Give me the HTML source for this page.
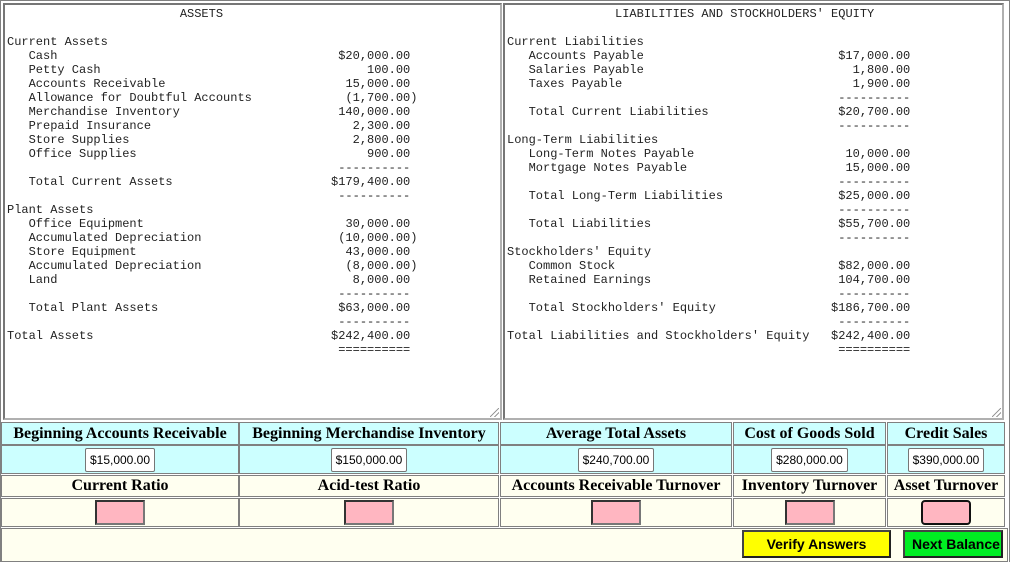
<!DOCTYPE html>
<html><head><meta charset="utf-8"><style>
*{box-sizing:border-box;margin:0;padding:0}
body{width:1013px;height:562px;background:#fff;position:relative;overflow:hidden;font-family:"Liberation Sans",Arial,sans-serif}
.frame{position:absolute;left:0;top:0;width:1010px;height:562px;border:1px solid #808080;border-bottom:none}
.ta{position:absolute;top:3px;height:417px;border:2px solid;border-color:#767676 #b0b0b0 #b0b0b0 #767676;background:#fff;padding:2px 0 0 2px;font-family:"Liberation Mono","Courier New",monospace;font-size:12px;line-height:14px;white-space:pre;color:#222}
.r{position:relative;width:57ch;height:14px}
.r b{font-weight:normal;position:absolute;right:0;top:0}
.grip{position:absolute;right:1px;bottom:1px;width:9px;height:9px;background:linear-gradient(135deg,transparent 45%,#999 45%,#999 55%,transparent 55%,transparent 70%,#999 70%,#999 80%,transparent 80%)}
.c{position:absolute;border:1px solid #808080;display:flex;align-items:center;justify-content:center}
.cy{background:#ccffff}.cr{background:#fffff0}
.h{font-family:"Liberation Serif","Times New Roman",serif;font-weight:bold;font-size:16px;color:#000;white-space:nowrap}
.in{background:#fff;border:1px solid #767676;border-radius:2px;height:24px;font-size:12px;padding:0 4px;display:flex;align-items:center;color:#000}
.pk{width:50px;height:25px;background:#ffb6c1;border:2px solid;border-color:#333 #777 #777 #333}
.btn{position:absolute;font-weight:bold;font-size:14px;display:flex;align-items:center;justify-content:center;border:2px solid;border-color:#444 #222 #222 #444;color:#000}
</style></head><body>
<div class="frame"></div>
<div class="ta" style="left:3px;width:499px"><div class="r">                        ASSETS</div><div class="r"></div><div class="r">Current Assets</div><div class="r">   Cash<b>$20,000.00 </b></div><div class="r">   Petty Cash<b>100.00 </b></div><div class="r">   Accounts Receivable<b>15,000.00 </b></div><div class="r">   Allowance for Doubtful Accounts<b>(1,700.00)</b></div><div class="r">   Merchandise Inventory<b>140,000.00 </b></div><div class="r">   Prepaid Insurance<b>2,300.00 </b></div><div class="r">   Store Supplies<b>2,800.00 </b></div><div class="r">   Office Supplies<b>900.00 </b></div><div class="r"><b>---------- </b></div><div class="r">   Total Current Assets<b>$179,400.00 </b></div><div class="r"><b>---------- </b></div><div class="r">Plant Assets</div><div class="r">   Office Equipment<b>30,000.00 </b></div><div class="r">   Accumulated Depreciation<b>(10,000.00)</b></div><div class="r">   Store Equipment<b>43,000.00 </b></div><div class="r">   Accumulated Depreciation<b>(8,000.00)</b></div><div class="r">   Land<b>8,000.00 </b></div><div class="r"><b>---------- </b></div><div class="r">   Total Plant Assets<b>$63,000.00 </b></div><div class="r"><b>---------- </b></div><div class="r">Total Assets<b>$242,400.00 </b></div><div class="r"><b>========== </b></div><div class="grip"></div></div>
<div class="ta" style="left:503px;width:501px"><div class="r">               LIABILITIES AND STOCKHOLDERS' EQUITY</div><div class="r"></div><div class="r">Current Liabilities</div><div class="r">   Accounts Payable<b>$17,000.00 </b></div><div class="r">   Salaries Payable<b>1,800.00 </b></div><div class="r">   Taxes Payable<b>1,900.00 </b></div><div class="r"><b>---------- </b></div><div class="r">   Total Current Liabilities<b>$20,700.00 </b></div><div class="r"><b>---------- </b></div><div class="r">Long-Term Liabilities</div><div class="r">   Long-Term Notes Payable<b>10,000.00 </b></div><div class="r">   Mortgage Notes Payable<b>15,000.00 </b></div><div class="r"><b>---------- </b></div><div class="r">   Total Long-Term Liabilities<b>$25,000.00 </b></div><div class="r"><b>---------- </b></div><div class="r">   Total Liabilities<b>$55,700.00 </b></div><div class="r"><b>---------- </b></div><div class="r">Stockholders' Equity</div><div class="r">   Common Stock<b>$82,000.00 </b></div><div class="r">   Retained Earnings<b>104,700.00 </b></div><div class="r"><b>---------- </b></div><div class="r">   Total Stockholders' Equity<b>$186,700.00 </b></div><div class="r"><b>---------- </b></div><div class="r">Total Liabilities and Stockholders' Equity<b>$242,400.00 </b></div><div class="r"><b>========== </b></div><div class="grip"></div></div>

<div class="c cy h" style="left:1px;top:422px;width:238px;height:23px">Beginning Accounts Receivable</div>
<div class="c cy h" style="left:239px;top:422px;width:260px;height:23px">Beginning Merchandise Inventory</div>
<div class="c cy h" style="left:500px;top:422px;width:232px;height:23px">Average Total Assets</div>
<div class="c cy h" style="left:733px;top:422px;width:153px;height:23px">Cost of Goods Sold</div>
<div class="c cy h" style="left:887px;top:422px;width:118px;height:23px">Credit Sales</div>

<div class="c cy" style="left:1px;top:445px;width:238px;height:29px"><div class="in">$15,000.00</div></div>
<div class="c cy" style="left:239px;top:445px;width:260px;height:29px"><div class="in">$150,000.00</div></div>
<div class="c cy" style="left:500px;top:445px;width:232px;height:29px"><div class="in">$240,700.00</div></div>
<div class="c cy" style="left:733px;top:445px;width:153px;height:29px"><div class="in">$280,000.00</div></div>
<div class="c cy" style="left:887px;top:445px;width:118px;height:29px"><div class="in">$390,000.00</div></div>

<div class="c cr h" style="left:1px;top:475px;width:238px;height:22px">Current Ratio</div>
<div class="c cr h" style="left:239px;top:475px;width:260px;height:22px">Acid-test Ratio</div>
<div class="c cr h" style="left:500px;top:475px;width:232px;height:22px">Accounts Receivable Turnover</div>
<div class="c cr h" style="left:733px;top:475px;width:153px;height:22px">Inventory Turnover</div>
<div class="c cr h" style="left:887px;top:475px;width:118px;height:22px">Asset Turnover</div>

<div class="c cr" style="left:1px;top:498px;width:238px;height:29px"><div class="pk"></div></div>
<div class="c cr" style="left:239px;top:498px;width:260px;height:29px"><div class="pk"></div></div>
<div class="c cr" style="left:500px;top:498px;width:232px;height:29px"><div class="pk"></div></div>
<div class="c cr" style="left:733px;top:498px;width:153px;height:29px"><div class="pk"></div></div>
<div class="c cr" style="left:887px;top:498px;width:118px;height:29px"><div class="pk" style="border-radius:4px;border-color:#111"></div></div>

<div class="c cr" style="left:1px;top:528px;width:1007px;height:34px"></div>
<div class="btn" style="left:742px;top:530px;width:149px;height:28px;background:#ffff00">Verify Answers</div>
<div class="btn" style="left:903px;top:530px;width:100px;height:28px;background:#00ee22;justify-content:flex-start;padding-left:7px;overflow:hidden;white-space:nowrap">Next Balance Sheet</div>
</body></html>
